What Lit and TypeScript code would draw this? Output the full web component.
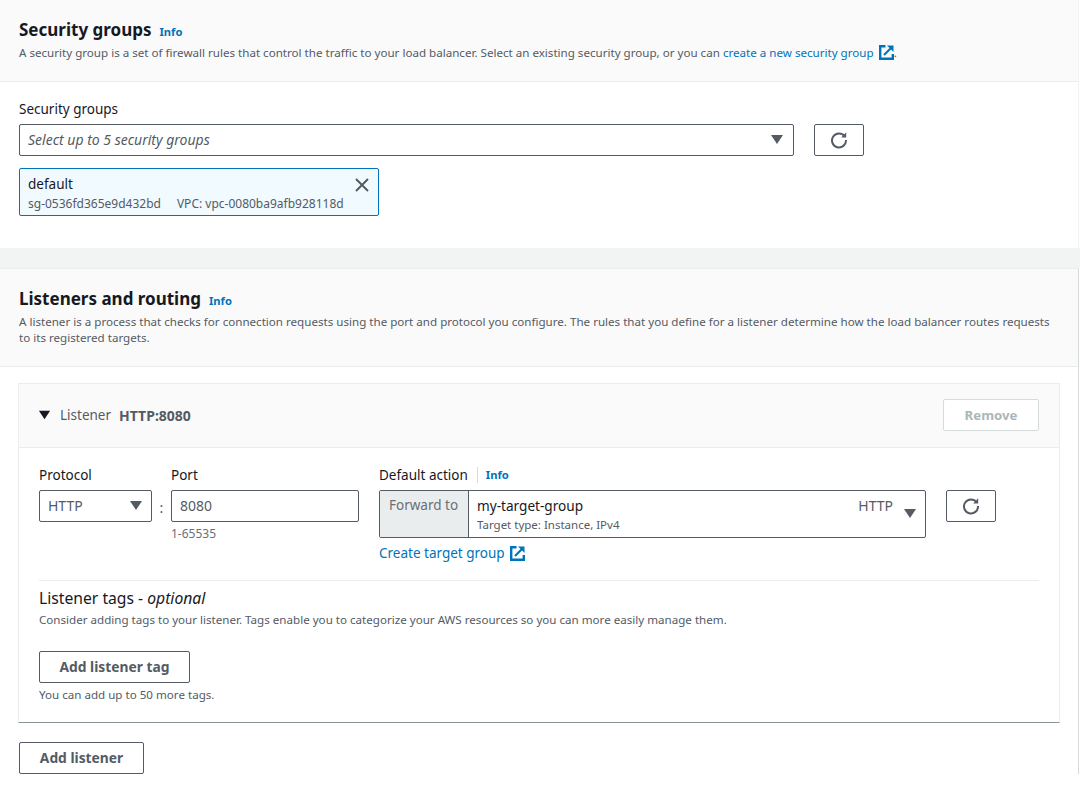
import { LitElement, html, css, svg } from 'lit';
import { customElement } from 'lit/decorators.js';

const caret = svg`<path d="M1 2h12L7 11z" fill="#545b64"/>`;

const refreshIcon = html`<svg width="18" height="18" viewBox="0 0 18 18" fill="none">
  <path d="M14.6 5.2A7 7 0 1 0 16 9" stroke="#545b64" stroke-width="2"/>
  <path d="M11.2 6.4h5V1.2z" fill="#545b64"/>
</svg>`;

const externalIcon = html`<svg class="ext" width="15" height="15" viewBox="0 0 15 15" fill="none">
  <path d="M6.5 1.2H1.2v12.6h12.6V9" stroke="#0073bb" stroke-width="2.4"/>
  <path d="M5 10l7-7" stroke="#0073bb" stroke-width="2.2"/>
  <path d="M8 0.5h6.5V7z" fill="#0073bb"/>
</svg>`;

@customElement('app-root')
export class AppRoot extends LitElement {
  static styles = css`
    :host {
      display: block;
      width: 1080px;
      height: 794px;
      overflow: hidden;
      background: #fff;
      font-family: 'Noto Sans', 'Open Sans', sans-serif;
      font-size: 14px;
      color: #16191f;
    }
    * { box-sizing: border-box; }
    .card { width: 1079px; background: #fff; }
    .card-head {
      background: #fafafa;
      border-bottom: 1px solid #eaeded;
      padding: 0 19px;
    }
    .first { border-right: 1px solid #f2f3f3; }
    .first .card-head { height: 82px; padding-top: 18px; }
    .second { border-top: 1px solid #eaeded; border-right: 1px solid #d5dbdb; }
    .second .card-head { height: 98px; padding-top: 18px; }
    h2 { display: flex; align-items: baseline; gap: 8px; margin: 0; font-size: 17px; line-height: 24px; font-weight: 700; }
    .info { font-size: 11.2px; font-weight: 700; color: #0073bb; }
    .desc { margin: 0; font-size: 11.6px; line-height: 16px; color: #545b64; }
    .card-head .desc { margin-top: 1px; }
    .link { color: #0073bb; }
    .ext { vertical-align: -3px; margin-left: 2px; }
    .first-body { height: 166px; padding: 18px 19px 0; }
    .label { font-size: 13.5px; line-height: 18px; }
    .sg-row { display: flex; gap: 20px; margin-top: 6px; }
    .box {
      display: flex; align-items: center; height: 32px;
      border: 1px solid #545b64; border-radius: 2px; background: #fff;
      padding: 0 8px 1px; font-size: 14px;
    }
    .sg-select { width: 775px; justify-content: space-between; font-style: italic; color: #545b64; }
    .sg-select svg { margin-right: 1px; }
    .icon-btn {
      display: flex; align-items: center; justify-content: center;
      width: 50px; height: 32px; border: 1px solid #545b64; border-radius: 2px; background: #fff; padding: 0;
    }
    .token {
      display: flex; justify-content: space-between;
      width: 360px; height: 48px; margin-top: 12px; padding: 6px 8px 0;
      background: #f1faff; border: 1px solid #0073bb; border-radius: 2px;
    }
    .token-name { font-size: 13.5px; line-height: 18px; }
    .token-meta { display: flex; gap: 16px; font-size: 12px; line-height: 15px; color: #545b64; margin-top: 3px; }
    .token svg { margin-top: 2px; }
    .gap { height: 20px; background: #f2f3f3; }
    .second-body { padding: 16px 19px 0 18px; }
    .listener {
      width: 1042px; height: 340px;
      border: 1px solid #eaeded; border-bottom: 1px solid #879596; border-radius: 1px;
    }
    .listener-head {
      display: flex; align-items: center; justify-content: space-between;
      height: 64px; padding: 0 20px 1px 19px;
      background: #fafafa; border-bottom: 1px solid #eaeded;
    }
    .listener-title { display: flex; align-items: center; font-size: 13.5px; color: #545b64; }
    .listener-title svg { margin-right: 9px; }
    .listener-title b { margin-left: 8px; font-size: 14px; }
    .remove {
      width: 96px; height: 32px; border: 1px solid #d5dbdb; border-radius: 2px;
      background: #fff; color: #aab7b8; font: 700 13.2px 'Noto Sans', sans-serif; padding: 0;
    }
    .listener-body { padding: 18px 20px 0; }
    .fields { display: flex; height: 114px; }
    .protocol { width: 113px; }
    .protocol .box { margin-top: 6px; justify-content: space-between; color: #545b64; }
    .colon { width: 19px; padding-top: 33px; text-align: center; color: #545b64; font-size: 14px; line-height: 18px; }
    .port { width: 188px; }
    .port .box { margin-top: 6px; color: #545b64; }
    .hint { font-size: 12px; line-height: 16px; color: #687078; margin-top: 4px; }
    .action { width: 547px; margin-left: 20px; }
    .action-label { display: flex; align-items: center; height: 18px; font-size: 13.5px; }
    .action-label .info { margin-left: 9px; padding-left: 8px; border-left: 1px solid #d5dbdb; line-height: 16px; }
    .forward {
      display: flex; height: 48px; margin-top: 6px;
      border: 1px solid #545b64; border-radius: 2px; overflow: hidden;
    }
    .forward-tag {
      width: 89px; padding: 4px 0 0 9px; background: #eaeded; color: #687078;
      border-right: 1px solid #545b64; font-size: 13.5px; line-height: 20px;
    }
    .forward-main { flex: 1; display: flex; justify-content: space-between; padding: 5px 8px 0; }
    .forward-name { font-size: 13.6px; line-height: 19px; }
    .forward-type { font-size: 11.5px; line-height: 15px; color: #545b64; margin-top: 2px; }
    .forward-right { display: flex; gap: 10px; font-size: 14px; line-height: 19px; color: #545b64; }
    .forward-right svg { margin-top: 11px; }
    .create { margin-top: 6px; font-size: 13.5px; line-height: 18px; color: #0073bb; }
    .refresh-2 { margin-left: 20px; margin-top: 24px; }
    .tags { border-top: 1px solid #eaeded; padding-top: 7px; }
    .tags-title { font-size: 15.7px; line-height: 20px; }
    .tags-title i { font-style: italic; }
    .tags .desc { margin-top: 4px; }
    .btn {
      display: block; height: 32px; border: 1px solid #545b64; border-radius: 2px;
      background: #fff; color: #545b64; font: 700 13.8px 'Noto Sans', sans-serif; padding: 0 0 2px;
    }
    .add-tag { width: 151px; margin-top: 23px; }
    .tags .limit { margin-top: 4px; }
    .add-listener { width: 125px; margin: 19px 0 0 1px; }
  `;

  render() {
    return html`
      <section class="card first">
        <div class="card-head">
          <h2>Security groups <span class="info">Info</span></h2>
          <p class="desc">A security group is a set of firewall rules that control the traffic to your load balancer. Select an existing security group, or you can <span class="link">create a new security group ${externalIcon}</span>.</p>
        </div>
        <div class="first-body">
          <div class="label">Security groups</div>
          <div class="sg-row">
            <div class="box sg-select">Select up to 5 security groups
              <svg width="14" height="14" viewBox="0 0 14 14">${caret}</svg>
            </div>
            <button class="icon-btn">${refreshIcon}</button>
          </div>
          <div class="token">
            <div>
              <div class="token-name">default</div>
              <div class="token-meta"><span>sg-0536fd365e9d432bd</span><span>VPC: vpc-0080ba9afb928118d</span></div>
            </div>
            <svg width="16" height="16" viewBox="0 0 16 16" fill="none">
              <path d="M2 2l12 12M14 2L2 14" stroke="#545b64" stroke-width="2"/>
            </svg>
          </div>
        </div>
      </section>
      <div class="gap"></div>
      <section class="card second">
        <div class="card-head">
          <h2>Listeners and routing <span class="info">Info</span></h2>
          <p class="desc">A listener is a process that checks for connection requests using the port and protocol you configure. The rules that you define for a listener determine how the load balancer routes requests to its registered targets.</p>
        </div>
        <div class="second-body">
          <div class="listener">
            <div class="listener-head">
              <div class="listener-title">
                <svg width="13" height="13" viewBox="0 0 14 14"><path d="M1 2h12L7 11z" fill="#16191f"/></svg>
                Listener <b>HTTP:8080</b>
              </div>
              <button class="remove">Remove</button>
            </div>
            <div class="listener-body">
              <div class="fields">
                <div class="protocol">
                  <div class="label">Protocol</div>
                  <div class="box">HTTP <svg width="14" height="14" viewBox="0 0 14 14">${caret}</svg></div>
                </div>
                <div class="colon">:</div>
                <div class="port">
                  <div class="label">Port</div>
                  <div class="box">8080</div>
                  <div class="hint">1-65535</div>
                </div>
                <div class="action">
                  <div class="action-label">Default action <span class="info">Info</span></div>
                  <div class="forward">
                    <div class="forward-tag">Forward to</div>
                    <div class="forward-main">
                      <div>
                        <div class="forward-name">my-target-group</div>
                        <div class="forward-type">Target type: Instance, IPv4</div>
                      </div>
                      <div class="forward-right">HTTP <svg width="14" height="14" viewBox="0 0 14 14">${caret}</svg></div>
                    </div>
                  </div>
                  <div class="create">Create target group ${externalIcon}</div>
                </div>
                <button class="icon-btn refresh-2">${refreshIcon}</button>
              </div>
              <div class="tags">
                <div class="tags-title">Listener tags - <i>optional</i></div>
                <p class="desc">Consider adding tags to your listener. Tags enable you to categorize your AWS resources so you can more easily manage them.</p>
                <button class="btn add-tag">Add listener tag</button>
                <p class="desc limit">You can add up to 50 more tags.</p>
              </div>
            </div>
          </div>
          <button class="btn add-listener">Add listener</button>
        </div>
      </section>
    `;
  }
}
